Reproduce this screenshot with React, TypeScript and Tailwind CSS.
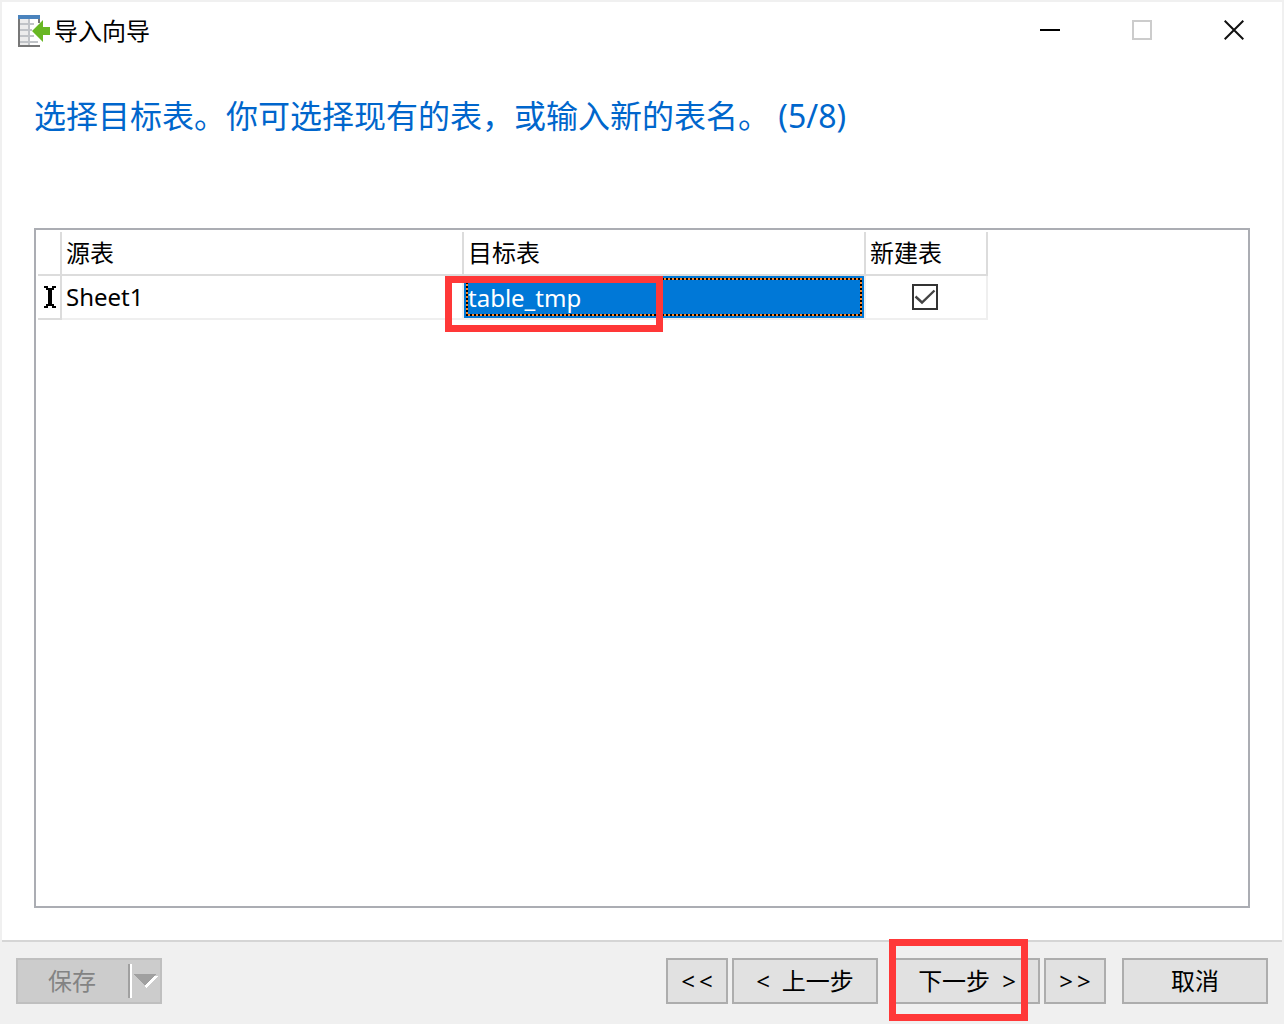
import React from "react";

const font = "font-['Noto_Sans','Noto_Sans_CJK_SC',sans-serif]";
const button =
  "h-[46px] border-2 border-[#adadad] bg-[#e1e1e1] flex items-center justify-center whitespace-nowrap leading-6";

function AppIcon() {
  return (
    <svg width="32" height="32" viewBox="0 0 32 32" shapeRendering="crispEdges" aria-hidden="true">
      <path d="M0 4h22v28H0z" fill="#777" />
      <path d="M2 4h20v26H2z" fill="#fff" />
      <path d="M2 4h8v26H2z" fill="#ececec" />
      <path d="M0 0h22v4H0z" fill="#4a83bd" />
      <path d="M2 9h14M2 15h12M2 21h14M2 27h18M11 4v26" stroke="#c0c3c7" strokeWidth="2" fill="none" />
      <path d="M20 4h2v4h-2z" fill="#777" />
      <path d="M14 16L25 5v7h7v8h-7v7z" fill="#68b723" shapeRendering="auto" />
    </svg>
  );
}

function TitleBar() {
  const control = "flex h-14 w-[92px] items-center justify-center";
  return (
    <header className="flex h-14 items-center justify-between pl-4">
      <div className="flex items-center gap-1 pt-[2px]">
        <AppIcon />
        <h1 className="text-2xl leading-8">导入向导</h1>
      </div>
      <div className="flex items-center pr-[2px]">
        <button aria-label="最小化" className={control}>
          <span className="h-[2px] w-5 bg-black" />
        </button>
        <button aria-label="最大化" disabled className={control}>
          <span className="size-5 border-2 border-[#cccccc]" />
        </button>
        <button aria-label="关闭" className={control}>
          <svg width="20" height="20" viewBox="0 0 20 20" aria-hidden="true">
            <path d="M.7.7l18.600 18.600M19.300.7L.7 19.300" stroke="#111" strokeWidth="2" />
          </svg>
        </button>
      </div>
    </header>
  );
}

function TableGrid() {
  const head = "border-b-2 border-r-2 border-[#dcdcdc] px-1 text-left font-normal";
  return (
    <table className="w-[950px] table-fixed border-separate border-spacing-0 text-2xl leading-8">
      <colgroup>
        <col className="w-6" />
        <col className="w-[402px]" />
        <col className="w-[402px]" />
        <col className="w-[122px]" />
      </colgroup>
      <thead>
        <tr className="h-11">
          <th className={head} aria-label="当前行" />
          <th className={head}>源表</th>
          <th className={head}>目标表</th>
          <th className={head}>新建表</th>
        </tr>
      </thead>
      <tbody>
        <tr className="h-11">
          <td className="border-b-2 border-r-2 border-[#dcdcdc] p-0">
            <svg className="ml-auto mr-1" width="12" height="22" viewBox="0 0 12 22" shapeRendering="crispEdges" aria-hidden="true">
              <path d="M0 0h4v2H0zM8 0h4v2H8zM2 2h8v2H2zM4 4h4v14H4zM2 18h8v2H2zM0 20h4v2H0zM8 20h4v2H8z" fill="#000" />
            </svg>
          </td>
          <td className="border-b-2 border-r-2 border-[#efefef] px-1 py-0">Sheet1</td>
          <td className="relative border-b-2 border-r-2 border-[#efefef] p-0">
            <div className="h-[42px] bg-[#0078d7] p-[2px]">
              <div className="h-full bg-[conic-gradient(#ff8728_25%,#000_0_50%,#ff8728_0_75%,#000_0)] bg-size-[4px_4px] p-[2px]">
                <input
                  aria-label="目标表"
                  defaultValue="table_tmp"
                  className="block h-full w-full bg-[#0078d7] text-white outline-none"
                />
              </div>
            </div>
            <span className="pointer-events-none absolute -left-[19px] top-0 h-14 w-[218px] border-[7px] border-[#ff3838]" />
          </td>
          <td className="border-b-2 border-r-2 border-[#efefef] p-0 pr-[2px]">
            <label className="relative mx-auto flex size-[26px]">
              <input
                type="checkbox"
                defaultChecked
                aria-label="新建表"
                className="peer size-[26px] appearance-none border-2 border-[#333] bg-white"
              />
              <svg
                className="pointer-events-none absolute inset-0 hidden peer-checked:block"
                width="26"
                height="26"
                viewBox="0 0 26 26"
                aria-hidden="true"
              >
                <path d="M3.500 12.500l6.500 6L22.500 6.500" fill="none" stroke="#444" strokeWidth="2.400" />
              </svg>
            </label>
          </td>
        </tr>
      </tbody>
    </table>
  );
}

function Footer() {
  return (
    <footer className="flex items-center justify-between border-t-2 border-[#d5d5d5] bg-[#f0f0f0] px-[14px] pb-5 pt-4 text-2xl">
      <button disabled className="flex h-[46px] w-[146px] items-center border-2 border-[#bfbfbf] bg-[#cccccc] text-[#838383]">
        <span className="flex-1 pr-[2px] leading-6">保存</span>
        <span className="h-[34px] w-1 border-l-2 border-r-2 border-l-[#a0a0a0] border-r-white" />
        <svg className="ml-[2px] mr-[2px]" width="24" height="14" viewBox="0 0 24 14" shapeRendering="crispEdges" aria-hidden="true">
          <path d="M12 14L24 2h-4L10 12z" fill="#fff" />
          <path d="M0 0h22L11 12z" fill="#a0a0a0" />
        </svg>
      </button>
      <div className="flex gap-4">
        <div className="flex gap-1">
          <button aria-label="第一步" className={button + " w-[62px] gap-1"}>
            <span>&lt;</span>
            <span>&lt;</span>
          </button>
          <button className={button + " w-[146px] gap-3"}>
            <span>&lt;</span>
            <span>上一步</span>
          </button>
        </div>
        <div className="flex gap-1">
          <button className={button + " relative w-[146px] gap-3"}>
            <span>下一步</span>
            <span>&gt;</span>
            <span className="pointer-events-none absolute -left-[7px] -top-[21px] h-[82px] w-[139px] border-[7px] border-[#ff3838]" />
          </button>
          <button aria-label="最后一步" className={button + " w-[62px] gap-1"}>
            <span>&gt;</span>
            <span>&gt;</span>
          </button>
        </div>
        <button className={button + " w-[146px]"}>取消</button>
      </div>
    </footer>
  );
}

export default function App() {
  return (
    <div className={font + " flex min-h-screen flex-col border-x-2 border-t-2 border-[#f0f0f0] bg-white text-black"}>
      <TitleBar />
      <main className="flex flex-1 flex-col px-8 pb-8">
        <h2 className="mt-[34px] text-[32px] leading-[48px] text-[#0066cc]">
          选择目标表。你可选择现有的表，或输入新的表名。 (5/8)
        </h2>
        <section className="mt-[88px] flex-1 border-2 border-[#abadb3] p-[2px]">
          <TableGrid />
        </section>
      </main>
      <Footer />
    </div>
  );
}
